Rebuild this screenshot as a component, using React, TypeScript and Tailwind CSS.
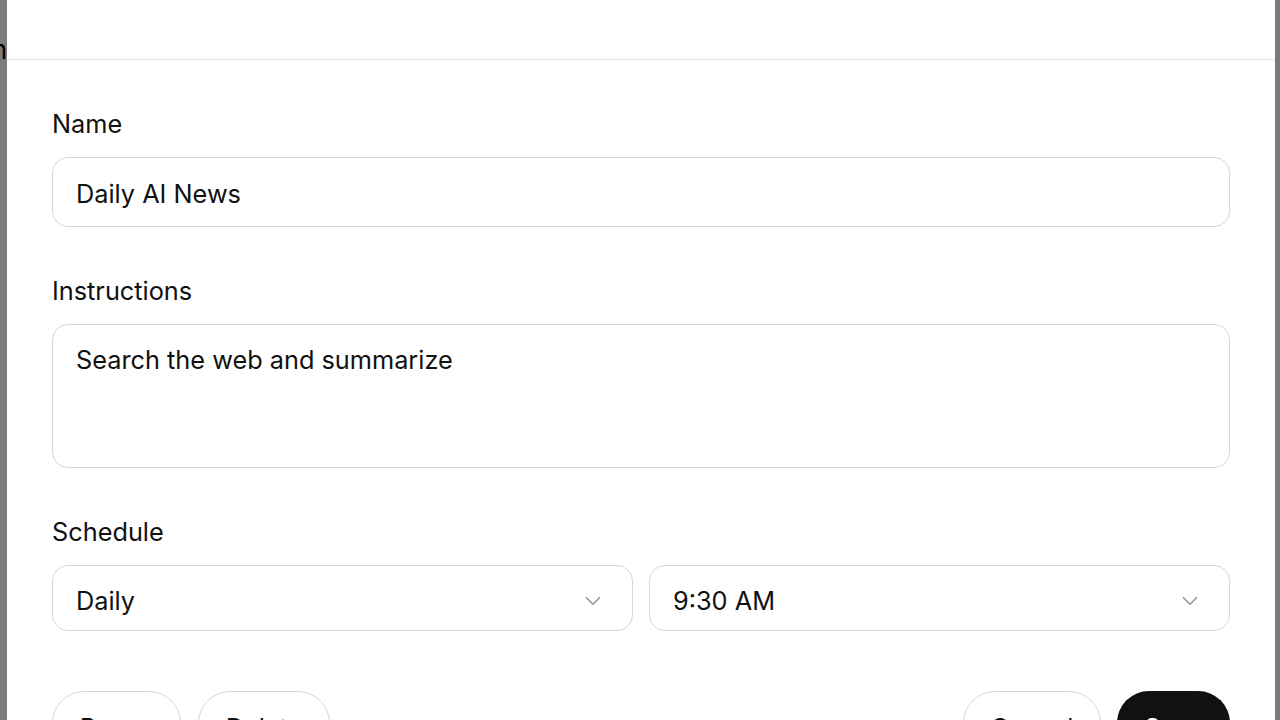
import { ChevronDown } from 'lucide-react';

const font = { fontFamily: 'Inter, "Noto Sans", sans-serif' };

function Label({ children }: { children: string }) {
  return <div className="text-[25.3px] leading-[32px] text-[#111] mb-[17px]">{children}</div>;
}

function Select({ value }: { value: string }) {
  return (
    <div className="flex-1 h-[66px] rounded-[16px] border border-[#d6d6d6] flex items-center justify-between pl-[23px] pr-[26px] pt-[5px]">
      <span className="text-[25.3px] text-[#111]">{value}</span>
      <ChevronDown size={26} strokeWidth={1.6} className="text-[#9a9a9a]" />
    </div>
  );
}

export default function App() {
  return (
    <div className="w-[1280px] h-[720px] overflow-hidden bg-[#7b7b7b] flex" style={font}>
      {/* page behind the sheet */}
      <div className="w-[7px] overflow-hidden flex justify-end shrink-0">
        <span className="text-[26px] leading-[32px] text-black mt-[34px]">n</span>
      </div>

      <div className="w-[1268px] bg-white flex flex-col shrink-0">
        <div className="h-[60px] border-b border-[#e3e3e3] shrink-0" />

        <div className="px-[45px] pt-[48px]">
          <Label>Name</Label>
          <div className="h-[70px] rounded-[16px] border border-[#d6d6d6] flex items-center px-[23px] pt-[3px] text-[25.3px] text-[#111]">
            Daily AI News
          </div>

          <div className="mt-[48px]">
            <Label>Instructions</Label>
            <div className="h-[144px] rounded-[16px] border border-[#d6d6d6] px-[23px] pt-[18px] text-[25.3px] leading-[34px] text-[#111]">
              Search the web and summarize
            </div>
          </div>

          <div className="mt-[48px]">
            <Label>Schedule</Label>
            <div className="flex gap-[16px]">
              <Select value="Daily" />
              <Select value="9:30 AM" />
            </div>
          </div>

          <div className="mt-[60px] flex items-start justify-between">
            <div className="flex gap-[17px]">
              <button className="h-[64px] w-[129px] rounded-full border border-[#d6d6d6] pt-[10px] text-[25.3px] text-[#111]">Pause</button>
              <button className="h-[64px] w-[132px] rounded-full border border-[#d6d6d6] pt-[10px] text-[25.3px] text-[#111]">Delete</button>
            </div>
            <div className="flex gap-[16px]">
              <button className="h-[64px] w-[138px] rounded-full border border-[#d6d6d6] pt-[10px] text-[25.3px] text-[#111]">Cancel</button>
              <button className="h-[64px] w-[113px] rounded-full bg-[#111] pt-[10px] text-[25.3px] text-white">Save</button>
            </div>
          </div>
        </div>
      </div>
    </div>
  );
}
